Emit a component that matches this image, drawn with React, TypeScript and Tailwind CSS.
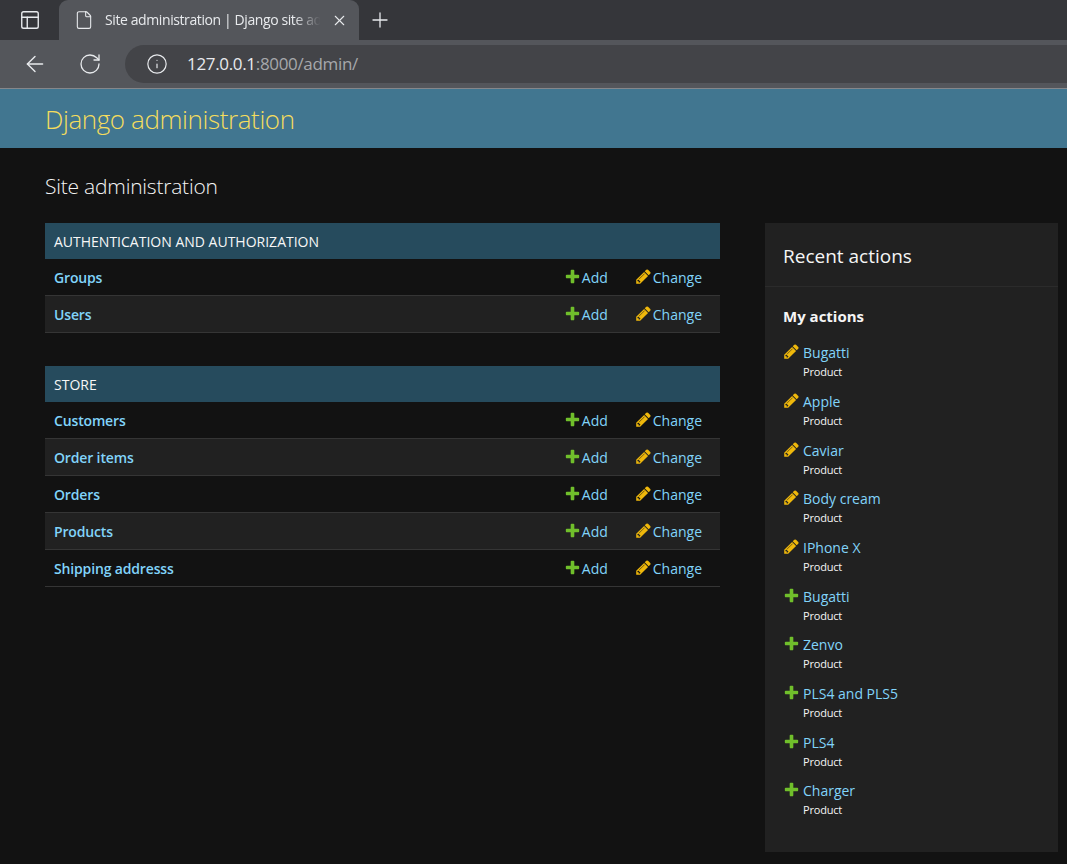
import React from "react";
import { PanelsTopLeft, File, X, Plus, ArrowLeft, RotateCw, Info } from "lucide-react";

const apps = [
  { name: "AUTHENTICATION AND AUTHORIZATION", models: ["Groups", "Users"] },
  { name: "STORE", models: ["Customers", "Order items", "Orders", "Products", "Shipping addresss"] },
];

const actions = [
  { name: "Bugatti", kind: "change" },
  { name: "Apple", kind: "change" },
  { name: "Caviar", kind: "change" },
  { name: "Body cream", kind: "change" },
  { name: "IPhone X", kind: "change" },
  { name: "Bugatti", kind: "add" },
  { name: "Zenvo", kind: "add" },
  { name: "PLS4 and PLS5", kind: "add" },
  { name: "PLS4", kind: "add" },
  { name: "Charger", kind: "add" },
];

const AddIcon = () => (
  <svg viewBox="0 0 1792 1792" className="w-[17px] h-[17px] shrink-0 fill-[#70bf2b]">
    <path d="M1600 796v192q0 40-28 68t-68 28h-416v416q0 40-28 68t-68 28h-192q-40 0-68-28t-28-68v-416h-416q-40 0-68-28t-28-68v-192q0-40 28-68t68-28h416v-416q0-40 28-68t68-28h192q40 0 68 28t28 68v416h416q40 0 68 28t28 68z" />
  </svg>
);

const ChangeIcon = () => (
  <svg viewBox="0 0 1792 1792" className="w-[17px] h-[17px] shrink-0 fill-[#efb80b]">
    <path d="M491 1536l91-91-235-235-91 91v107h128v128h107zm523-928q0-22-22-22-10 0-17 7l-542 542q-7 7-7 17 0 22 22 22 10 0 17-7l542-542q7-7 7-17zm-54-192l416 416-832 832h-416v-416zm683 96q0 53-37 90l-166 166-416-416 166-165q36-38 90-38 53 0 91 38l235 234q37 39 37 91z" />
  </svg>
);

const BrowserBar = () => (
  <div className="bg-[#54565b] text-[#e8eaed]">
    <div className="h-[40px] bg-[#35363a] flex items-end">
      <div className="w-[59px] h-[40px] flex items-center justify-center">
        <PanelsTopLeft size={22} strokeWidth={1.5} />
      </div>
      <div className="w-[300px] h-[40px] bg-[#54565b] rounded-t-[9px] flex items-center pl-[15px] pr-[11px]">
        <File size={20} strokeWidth={1.3} className="shrink-0" />
        <span className="ml-[11px] flex-1 overflow-hidden whitespace-nowrap text-[14px] leading-[18px] tracking-[-0.4px] [mask-image:linear-gradient(to_right,black_86%,transparent_98%)]">
          Site administration | Django site admin
        </span>
        <X size={17} strokeWidth={1.5} className="ml-[6px] shrink-0" />
      </div>
      <div className="ml-[9px] h-[40px] flex items-center">
        <Plus size={24} strokeWidth={1.3} />
      </div>
    </div>
    <div className="h-[49px] flex items-center border-b border-[#85878b]">
      <div className="w-[125px] flex items-center pl-[22px] gap-[30px] shrink-0">
        <ArrowLeft size={26} strokeWidth={1.3} />
        <RotateCw size={24} strokeWidth={1.3} />
      </div>
      <div className="flex-1 h-[38px] bg-[#434448] rounded-l-full flex items-center pl-[21px]">
        <Info size={22} strokeWidth={1.3} />
        <span className="ml-[19px] text-[17px] tracking-[-0.33px]">
          127.0.0.1<span className="text-[#a6a8ab]">:8000/admin/</span>
        </span>
      </div>
    </div>
  </div>
);

export default function App() {
  return (
    <div className="h-[864px] overflow-hidden bg-[#121212] font-['Open_Sans',sans-serif]">
      <BrowserBar />
      <header className="h-[59px] bg-[#417690] flex items-center pl-[45px]">
        <h1 className="text-[26px] leading-[36px] pt-[1px] font-light text-[#f5dd5d] tracking-[-0.4px]">Django administration</h1>
      </header>

      <main className="flex pl-[45px] pr-[9px]">
        <div className="w-[675px]">
          <h2 className="h-[75px] pt-[23px] text-[21px] leading-[30px] font-light text-[#f5f5f5] tracking-[-0.22px]">Site administration</h2>
          <div className="flex flex-col gap-[33px]">
            {apps.map((app) => (
              <section key={app.name}>
                <div className="h-[36px] bg-[#264b5d] flex items-center pl-[9px] pt-[1px] text-[14px] text-[#f7f7f7]">
                  {app.name}
                </div>
                {app.models.map((model, index) => (
                  <div
                    key={model}
                    className={`h-[37px] flex items-center pl-[9px] pr-[18px] border-b border-[#353535] text-[14px] ${
                      index % 2 === 1 ? "bg-[#212121]" : "bg-[#121212]"
                    }`}
                  >
                    <span className="flex-1 font-semibold text-[#81d4fa] tracking-[-0.15px]">{model}</span>
                    <span className="flex items-center gap-[1px] text-[#81d4fa]">
                      <span className="-mt-[2px]"><AddIcon /></span>
                      Add
                    </span>
                    <span className="ml-[27px] flex items-center gap-[1px] text-[#81d4fa]">
                      <span className="-mt-[2px]"><ChangeIcon /></span>
                      Change
                    </span>
                  </div>
                ))}
              </section>
            ))}
          </div>
        </div>

        <aside className="ml-[45px] mt-[75px] w-[293px] h-[629px] bg-[#212121] shrink-0">
          <h2 className="h-[64px] border-b border-[#2b2b2b] pl-[18px] pt-[20px] text-[19px] leading-[27px] text-[#f5f5f5]">
            Recent actions
          </h2>
          <h3 className="pl-[18px] pt-[18px] h-[56.3px] text-[15px] leading-[22px] font-bold text-[#f5f5f5]">My actions</h3>
          <ul className="pl-[18px]">
            {actions.map((action, index) => (
              <li key={index} className="h-[48.67px] flex items-start">
                <span className="w-[20px] shrink-0">
                  {action.kind === "add" ? <AddIcon /> : <ChangeIcon />}
                </span>
                <div>
                  <div className="text-[14px] leading-[20px] text-[#81d4fa]">{action.name}</div>
                  <div className="text-[11px] leading-[17px] text-[#f5f5f5] tracking-[-0.2px]">Product</div>
                </div>
              </li>
            ))}
          </ul>
        </aside>
      </main>
    </div>
  );
}
